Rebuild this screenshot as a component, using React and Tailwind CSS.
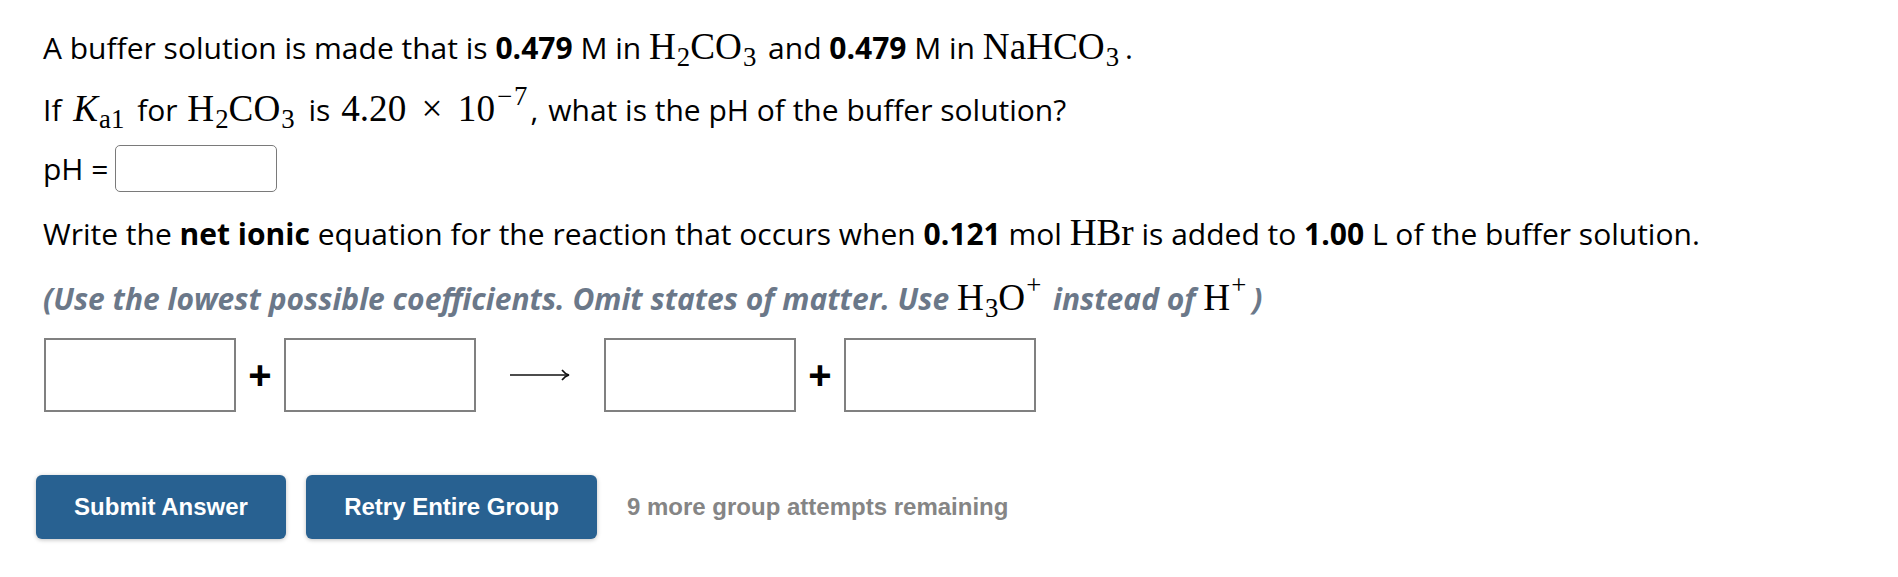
import React from "react";

const M = ({ children, className = "" }) => (
  <span className={"font-['Liberation_Serif',serif] text-[1.24em] leading-none text-black not-italic font-normal " + className}>
    {children}
  </span>
);
const Sub = ({ children }) => (
  <span className="relative top-[0.28em] ml-[1px] text-[0.72em] leading-none">{children}</span>
);
const Sup = ({ children, className = "" }) => (
  <span className={"relative top-[-0.58em] ml-[1px] text-[0.72em] leading-none " + className}>{children}</span>
);

const Box = () => <div className="w-[192px] h-[74px] border-2 border-[#808080] bg-white" />;
const Plus = () => (
  <span className="font-['Liberation_Sans',Arial,sans-serif] font-bold text-[40px] leading-none text-black">+</span>
);

export default function App() {
  return (
    <div className="min-h-[577px] w-[1898px] bg-white font-['Open_Sans',sans-serif] text-[30px] text-black pl-[43px] pt-[20px]">
      <p className="leading-[36px] h-[36px] mt-[8px] whitespace-nowrap">
        A buffer solution is made that is <b>0.479</b> M in{" "}
        <M className="mr-[4px]">
          H<Sub>2</Sub>CO<Sub>3</Sub>
        </M>{" "}
        and <b>0.479</b> M in{" "}
        <M>
          NaHCO<Sub>3</Sub>
        </M>
        <span className="ml-[6px]">.</span>
      </p>
      <p className="leading-[36px] h-[36px] mt-[26px] whitespace-nowrap">
        If{" "}
        <M className="ml-[4px] mr-[5px]">
          <i>K</i>
          <Sub>a1</Sub>
        </M>{" "}
        for{" "}
        <M className="ml-[2px] mr-[6px]">
          H<Sub>2</Sub>CO<Sub>3</Sub>
        </M>{" "}
        is{" "}
        <M className="ml-[3px]">
          4.20 <span className="mx-[6px]">×</span> 10
          <Sup className="ml-[2px]">
            <span className="mr-[2px]">−</span>7
          </Sup>
        </M>
        <span className="ml-[3px]">,</span>
        <span className="ml-[10px]">what is the pH of the buffer solution?</span>
      </p>
      <div className="flex items-center mt-[19px] h-[47px]">
        <span className="leading-[36px]">pH =</span>
        <div className="ml-[7px] w-[162px] h-[47px] border-[1.5px] border-[#7a7a7a] rounded-[5px]" />
      </div>
      <p className="leading-[36px] h-[36px] mt-[22px] whitespace-nowrap">
        Write the <b>net ionic</b> equation for the reaction that occurs when <b>0.121</b> mol <M>HBr</M> is added to{" "}
        <b>1.00</b> L of the buffer solution.
      </p>
      <p className="leading-[36px] h-[36px] mt-[29px] italic font-bold text-[#6b7889] whitespace-nowrap">
        (Use the lowest possible coefficients. Omit states of matter. Use{" "}
        <M className="mr-[4px]">
          H<Sub>3</Sub>O<Sup>+</Sup>
        </M>{" "}
        instead of{" "}
        <M>
          H<Sup>+</Sup>
        </M>
        <span className="ml-[6px]">)</span>
      </p>
      <div className="flex items-center mt-[23px] ml-[1px]">
        <Box />
        <div className="w-[48px] flex justify-center">
          <Plus />
        </div>
        <Box />
        <div className="w-[128px] flex justify-center">
          <svg width="60" height="14" viewBox="0 0 60 14" fill="none" stroke="#111" strokeWidth="1.6">
            <line x1="0" y1="7" x2="58" y2="7" />
            <path d="M52 2 Q55 6 59 7 Q55 8 52 12" />
          </svg>
        </div>
        <Box />
        <div className="w-[48px] flex justify-center">
          <Plus />
        </div>
        <Box />
      </div>
      <div className="flex items-center mt-[63px] ml-[-7px] font-['Liberation_Sans',Arial,sans-serif] font-bold">
        <button className="w-[250px] h-[64px] rounded-[6px] bg-[#286191] text-white text-[24px] shadow-[0_1px_4px_rgba(0,0,0,0.25)]">
          Submit Answer
        </button>
        <button className="ml-[20px] w-[291px] h-[64px] rounded-[6px] bg-[#286191] text-white text-[24px] shadow-[0_1px_4px_rgba(0,0,0,0.25)]">
          Retry Entire Group
        </button>
        <span className="ml-[30px] text-[24px] text-[#858585]">9 more group attempts remaining</span>
      </div>
    </div>
  );
}
